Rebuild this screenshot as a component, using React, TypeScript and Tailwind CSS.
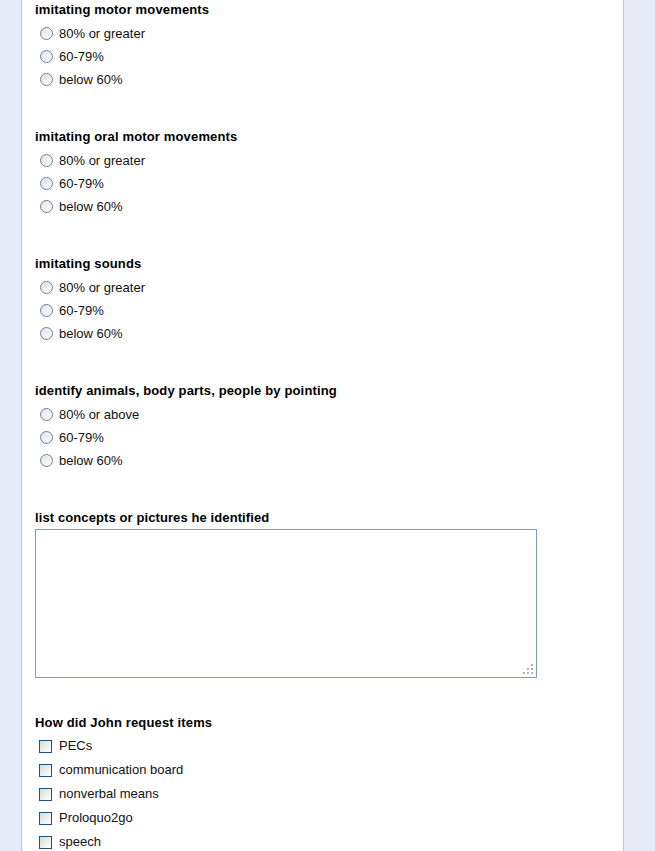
import React from 'react';

const radioGroups = [
    { title: 'imitating motor movements', options: ['80% or greater', '60-79%', 'below 60%'] },
    { title: 'imitating oral motor movements', options: ['80% or greater', '60-79%', 'below 60%'] },
    { title: 'imitating sounds', options: ['80% or greater', '60-79%', 'below 60%'] },
    { title: 'identify animals, body parts, people by pointing', options: ['80% or above', '60-79%', 'below 60%'] },
];

const requestOptions = ['PECs', 'communication board', 'nonverbal means', 'Proloquo2go', 'speech'];

const Radio: React.FC = () => (
    <span className="w-[13px] h-[13px] rounded-full border border-[#6b8197] bg-gradient-to-br from-[#dfe3e8] to-white shrink-0"></span>
);

const Checkbox: React.FC = () => (
    <span className="w-[13px] h-[13px] border border-[#1c5180] bg-gradient-to-br from-[#dcdcd6] to-white shrink-0"></span>
);

// grip dots in the textarea corner
const Grip: React.FC = () => (
    <svg className="absolute right-[3px] bottom-[3px]" width="11" height="11" viewBox="0 0 11 11">
        {[[8, 0], [4, 4], [8, 4], [0, 8], [4, 8], [8, 8]].map(([x, y]) => (
            <rect key={`${x}-${y}`} x={x} y={y} width="2" height="2" fill="#b4b4b4" />
        ))}
    </svg>
);

const App: React.FC = () => {
    return (
        <div className="min-h-[851px] bg-[#e5ebf7] pl-[21px] pr-[31px] font-['Liberation_Sans',Arial,sans-serif] text-black">
            <div className="min-h-[851px] bg-white border-l border-r border-[#c3c7cc] pl-[13px] pt-[1px]">
                {radioGroups.map((g) => (
                    <div key={g.title} className="mb-[37px]">
                        <div className="text-[13px] font-bold leading-[17px] tracking-[0.15px]">{g.title}</div>
                        <div className="mt-[4px]">
                            {g.options.map((o) => (
                                <label key={o} className="flex items-center h-[23px] pl-[5px] gap-[6px] text-[13px] text-[#111]">
                                    <Radio />
                                    <span>{o}</span>
                                </label>
                            ))}
                        </div>
                    </div>
                ))}

                <div className="text-[13px] font-bold leading-[17px] tracking-[0.1px]">list concepts or pictures he identified</div>
                <div className="relative mt-[3px] w-[502px] h-[149px]">
                    <textarea className="block w-full h-full border border-[#7f9db9] bg-white outline-none resize-none"></textarea>
                    <Grip />
                </div>

                <div className="mt-[36px] text-[13px] font-bold leading-[17px] tracking-[0.15px]">How did John request items</div>
                <div className="mt-[3px]">
                    {requestOptions.map((o) => (
                        <label key={o} className="flex items-center h-[24px] pl-[4px] gap-[7px] text-[13px] text-[#111]">
                            <Checkbox />
                            <span>{o}</span>
                        </label>
                    ))}
                </div>
            </div>
        </div>
    );
};

export default App;
